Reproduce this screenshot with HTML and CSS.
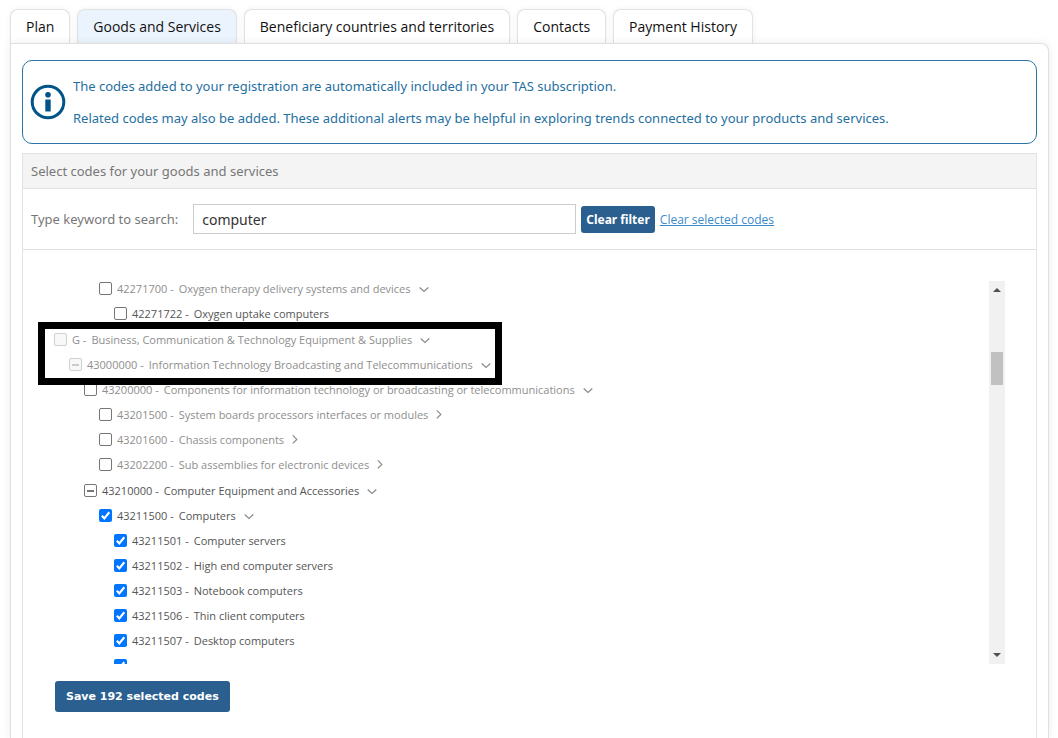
FILE: index.html
```html
<!DOCTYPE html>
<html lang="en">
<head>
  <meta charset="UTF-8">
  <meta name="viewport" content="width=device-width, initial-scale=1">
  <title>Goods and Services</title>
  <link rel="stylesheet" href="styles.css">
</head>
<body>
  <svg class="sprite" aria-hidden="true">
    <symbol id="chevron-down" viewBox="0 0 10 10"><path d="M0.7 3.5 L5 7.5 L9.3 3.5"/></symbol>
    <symbol id="chevron-right" viewBox="0 0 10 10"><path d="M0.8 0.4 L4.8 4.4 L0.8 8.4"/></symbol>
  </svg>

  <nav class="tabs">
    <button class="tab">Plan</button>
    <button class="tab active">Goods and Services</button>
    <button class="tab">Beneficiary countries and territories</button>
    <button class="tab">Contacts</button>
    <button class="tab">Payment History</button>
  </nav>

  <main class="panel">
    <div class="info-box">
      <svg class="info-icon" viewBox="0 0 36 36">
        <circle cx="18" cy="18" r="15.8" fill="none" stroke="#005488" stroke-width="3"/>
        <circle cx="18" cy="10.8" r="2.8" fill="#005488"/>
        <rect x="15.3" y="15.6" width="5.4" height="12" rx="0.6" fill="#005488"/>
      </svg>
      <div>
        <p>The codes added to your registration are automatically included in your TAS subscription.</p>
        <p>Related codes may also be added. These additional alerts may be helpful in exploring trends connected to your products and services.</p>
      </div>
    </div>

    <section class="codes">
      <h2 class="codes-title">Select codes for your goods and services</h2>

      <div class="search">
        <label for="keyword">Type keyword to search:</label>
        <input type="text" id="keyword" value="computer" autocomplete="off">
        <button class="btn btn-filter">Clear filter</button>
        <a href="#">Clear selected codes</a>
      </div>

      <div class="tree-wrap">
        <div class="tree">
          <ul class="tree-list level-3">
            <li>
              <div class="row muted"><label><input type="checkbox"><span>42271700 -</span><span>Oxygen therapy delivery systems and devices</span></label><button class="toggle" aria-label="Collapse"><svg><use href="#chevron-down"/></svg></button></div>
              <ul>
                <li><div class="row"><label><input type="checkbox"><span>42271722 -</span><span>Oxygen uptake computers</span></label></div></li>
              </ul>
            </li>
          </ul>
          <ul class="tree-list">
            <li class="segment">
              <div class="highlight"></div>
              <div class="row muted"><label><input type="checkbox" disabled><span>G -</span><span>Business, Communication &amp; Technology Equipment &amp; Supplies</span></label><button class="toggle" aria-label="Collapse"><svg><use href="#chevron-down"/></svg></button></div>
              <ul>
                <li>
                  <div class="row muted"><label><input type="checkbox" class="partial" disabled><span>43000000 -</span><span>Information Technology Broadcasting and Telecommunications</span></label><button class="toggle" aria-label="Collapse"><svg><use href="#chevron-down"/></svg></button></div>
                  <ul>
                    <li>
                      <div class="row muted"><label><input type="checkbox"><span>43200000 -</span><span>Components for information technology or broadcasting or telecommunications</span></label><button class="toggle" aria-label="Collapse"><svg><use href="#chevron-down"/></svg></button></div>
                      <ul>
                        <li><div class="row muted"><label><input type="checkbox"><span>43201500 -</span><span>System boards processors interfaces or modules</span></label><button class="toggle" aria-label="Expand"><svg><use href="#chevron-right"/></svg></button></div></li>
                        <li><div class="row muted"><label><input type="checkbox"><span>43201600 -</span><span>Chassis components</span></label><button class="toggle" aria-label="Expand"><svg><use href="#chevron-right"/></svg></button></div></li>
                        <li><div class="row muted"><label><input type="checkbox"><span>43202200 -</span><span>Sub assemblies for electronic devices</span></label><button class="toggle" aria-label="Expand"><svg><use href="#chevron-right"/></svg></button></div></li>
                      </ul>
                    </li>
                    <li>
                      <div class="row"><label><input type="checkbox" class="partial"><span>43210000 -</span><span>Computer Equipment and Accessories</span></label><button class="toggle" aria-label="Collapse"><svg><use href="#chevron-down"/></svg></button></div>
                      <ul>
                        <li>
                          <div class="row"><label><input type="checkbox" checked><span>43211500 -</span><span>Computers</span></label><button class="toggle" aria-label="Collapse"><svg><use href="#chevron-down"/></svg></button></div>
                          <ul>
                            <li><div class="row"><label><input type="checkbox" checked><span>43211501 -</span><span>Computer servers</span></label></div></li>
                            <li><div class="row"><label><input type="checkbox" checked><span>43211502 -</span><span>High end computer servers</span></label></div></li>
                            <li><div class="row"><label><input type="checkbox" checked><span>43211503 -</span><span>Notebook computers</span></label></div></li>
                            <li><div class="row"><label><input type="checkbox" checked><span>43211506 -</span><span>Thin client computers</span></label></div></li>
                            <li><div class="row"><label><input type="checkbox" checked><span>43211507 -</span><span>Desktop computers</span></label></div></li>
                            <li><div class="row"><input type="checkbox" checked aria-label="Next code"></div></li>
                          </ul>
                        </li>
                      </ul>
                    </li>
                  </ul>
                </li>
              </ul>
            </li>
          </ul>
        </div>
        <div class="scrollbar" aria-hidden="true">
          <span class="arrow-up"></span>
          <span class="thumb"></span>
          <span class="arrow-down"></span>
        </div>
      </div>

      <button class="btn btn-save">Save 192 selected codes</button>
    </section>
  </main>
</body>
</html>
```
FILE: styles.css
```css
* {
  box-sizing: border-box;
}

body {
  margin: 0;
  padding: 9px 9px 0 10px;
  min-height: 100vh;
  display: flex;
  flex-direction: column;
  font-family: "Noto Sans", "Open Sans", sans-serif;
  font-size: 13px;
  color: #777;
  background: #fff;
}

ul, p, h2 {
  margin: 0;
  padding: 0;
}

ul {
  list-style: none;
}

button, input {
  font: inherit;
}

.sprite {
  position: absolute;
  width: 0;
  height: 0;
}

/* tabs */
.tabs {
  display: flex;
  gap: 7px;
}

.tab {
  height: 34px;
  padding: 0 15px;
  font-family: "Open Sans", sans-serif;
  font-size: 14px;
  color: #111;
  white-space: nowrap;
  background: #fff;
  border: 1px solid #e2e2e2;
  border-bottom: none;
  border-radius: 8px 8px 0 0;
  box-shadow: 0 0 6px rgba(0, 0, 0, 0.06);
}

.tab.active {
  background: #ebf3fd;
}

.panel {
  flex: 1;
  display: flex;
  flex-direction: column;
  padding: 16px 11px 0;
  background: #fff;
  border: 1px solid #e0e0e0;
  border-bottom: none;
  border-radius: 0 8px 0 0;
  box-shadow: 0 0 8px rgba(0, 0, 0, 0.08);
}

/* info message */
.info-box {
  display: flex;
  align-items: center;
  gap: 7px;
  padding: 9px 7px;
  color: #1f6f9f;
  border: 1px solid #2a75a3;
  border-radius: 10px;
}

.info-icon {
  width: 36px;
  height: 36px;
  flex: none;
}

.info-box p {
  line-height: 32px;
}

/* code picker */
.codes {
  flex: 1;
  margin-top: 9px;
  border: 1px solid #e3e3e3;
  border-bottom: none;
}

.codes-title {
  padding: 0 8px;
  font-size: 13px;
  font-weight: 400;
  line-height: 34px;
  background: #f4f4f4;
  border-bottom: 1px solid #e0e0e0;
}

.search {
  display: flex;
  align-items: center;
  height: 61px;
  padding: 0 8px;
  border-bottom: 1px solid #e0e0e0;
}

.search input {
  width: 383px;
  height: 30px;
  margin: 0 5px 0 15px;
  padding: 0 8px;
  font-size: 14px;
  color: #333;
  background: #fff;
  border: 1px solid #ccc;
  outline: none;
}

.search a {
  margin-left: 5px;
  font-family: "Open Sans", sans-serif;
  font-size: 12px;
  color: #3a8bcb;
}

.btn {
  color: #fff;
  font-family: "DejaVu Sans", sans-serif;
  font-weight: 700;
  background: #2a5f8f;
  border: none;
  border-radius: 3px;
  cursor: pointer;
}

.btn-filter {
  height: 27px;
  padding: 0 5px;
  font-family: "Noto Sans", sans-serif;
  font-size: 12px;
}

.btn-save {
  height: 31px;
  margin: 17px 0 0 32px;
  padding: 0 11px;
  font-size: 11px;
}

/* tree */
.tree-wrap {
  display: flex;
  height: 383px;
  margin: 31px 31px 0 15px;
}

.tree {
  flex: 1;
  padding-left: 16px;
  overflow: hidden;
}

.tree-list:first-child {
  margin-top: -5px;
}

.tree-list.level-3 {
  padding-left: 45px;
}

.tree-list ul {
  padding: 0 0 1px 15px;
}

.segment {
  position: relative;
}

.row {
  display: flex;
  align-items: center;
  height: 25px;
  font-family: "Open Sans", sans-serif;
  font-size: 11px;
  color: #555;
  white-space: nowrap;
}

.row.muted {
  color: #8e8e8e;
}

.row label {
  display: flex;
  align-items: center;
  gap: 5px;
}

.row input {
  appearance: none;
  flex: none;
  width: 13px;
  height: 13px;
  margin: 0;
  background: #fff center / 100% 100% no-repeat;
  border: 1px solid #767676;
  border-radius: 2px;
}

.row input:checked {
  border: none;
  background-color: #0075ff;
  background-image: url("data:image/svg+xml,%3Csvg xmlns='http://www.w3.org/2000/svg' viewBox='0 0 12 12'%3E%3Cpath d='M2.6 6.3 L4.9 8.6 L9.5 3' fill='none' stroke='white' stroke-width='2'/%3E%3C/svg%3E");
}

.row input.partial {
  background-image: linear-gradient(#767676, #767676);
  background-size: 7px 2px;
}

.row input:disabled {
  background-color: #f8f8f8;
  border-color: #d0d0d0;
}

.row input.partial:disabled {
  background-image: linear-gradient(#ccc, #ccc);
}

.toggle {
  display: flex;
  margin-left: 8px;
  padding: 0;
  background: none;
  border: none;
}

.toggle svg {
  width: 10px;
  height: 10px;
  fill: none;
  stroke: #8a8a8a;
  stroke-width: 1.2;
}

.highlight {
  position: absolute;
  top: -5px;
  left: -16px;
  width: 464px;
  height: 63px;
  border: 7px solid #000;
  pointer-events: none;
}

/* scrollbar */
.scrollbar {
  display: flex;
  flex-direction: column;
  align-items: center;
  width: 16px;
  padding: 7px 0;
  background: #f1f1f1;
}

.arrow-up, .arrow-down {
  border: 4px solid transparent;
}

.arrow-up {
  border-top: none;
  border-bottom-color: #505050;
}

.arrow-down {
  margin-top: auto;
  border-bottom: none;
  border-top-color: #505050;
}

.thumb {
  width: 12px;
  height: 33px;
  margin-top: 60px;
  background: #c1c1c1;
}
```
